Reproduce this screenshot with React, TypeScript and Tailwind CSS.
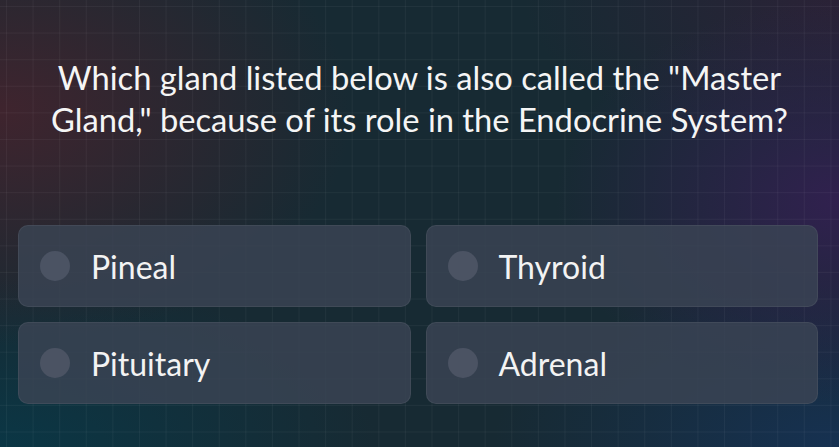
import React from "react";

const options = ["Pineal", "Thyroid", "Pituitary", "Adrenal"];

export default function App() {
  return (
    <div className="relative w-[839px] h-[447px] overflow-hidden bg-[#172a33] font-['Lato','Noto_Sans',sans-serif] text-white">
      <div className="w-full h-full bg-[image:radial-gradient(ellipse_60%_75%_at_0%_25%,rgba(70,35,45,0.85),transparent_70%),radial-gradient(ellipse_45%_60%_at_100%_45%,rgba(50,32,80,0.95),transparent_75%),radial-gradient(ellipse_50%_45%_at_100%_0%,rgba(45,33,55,0.9),transparent_75%),radial-gradient(ellipse_60%_50%_at_0%_100%,rgba(10,55,70,0.95),transparent_75%),radial-gradient(ellipse_55%_50%_at_100%_100%,rgba(22,50,85,0.9),transparent_75%)]">
        <div className="w-full h-full bg-[image:linear-gradient(to_right,rgba(255,255,255,0.045)_1px,transparent_1px),linear-gradient(to_bottom,rgba(255,255,255,0.045)_1px,transparent_1px)] bg-[size:26.6px_26.6px] bg-[position:6px_6px] flex flex-col">
          <h1 className="pt-[57px] px-[20px] text-center text-[32.7px] leading-[42px] font-normal text-[#f5f5f5]">
            Which gland listed below is also called the "Master Gland," because of its role in the Endocrine System?
          </h1>
          <div className="mt-[84px] pl-[18px] pr-[21px] grid grid-cols-2 gap-x-[15px] gap-y-[15px]">
            {options.map((o) => (
              <div
                key={o}
                className="h-[82px] rounded-[10px] bg-[rgba(58,68,84,0.82)] border border-white/[0.06] flex items-center pl-[21px]"
              >
                <div className="w-[30px] h-[30px] rounded-full bg-[#4b5363]" />
                <span className="ml-[21px] pt-[2px] text-[32px] leading-none text-[#f3f3f3]">{o}</span>
              </div>
            ))}
          </div>
        </div>
      </div>
    </div>
  );
}
